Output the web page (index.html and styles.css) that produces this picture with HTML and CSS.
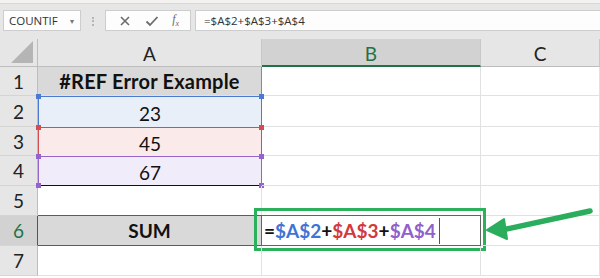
FILE: index.html
```html
<!DOCTYPE html>
<html lang="en">
<head>
    <meta charset="UTF-8">
    <meta name="viewport" content="width=device-width, initial-scale=1.0">
    <title>#REF Error Example</title>
    <link rel="stylesheet" href="styles.css">
</head>
<body>
    <div class="toolbar">
        <div class="name-box">COUNTIF<span class="drop">&#9662;</span></div>
        <div class="grip"></div>
        <div class="icon-box">
            <svg class="ico" viewBox="0 0 12 12" width="12" height="12"><path d="M2 2 L10 10 M10 2 L2 10" stroke="#6b6b6b" stroke-width="1.6" fill="none"/></svg>
            <svg class="ico" viewBox="0 0 14 12" width="14" height="12"><path d="M1.5 6.5 L5 10 L12.5 2" stroke="#6b6b6b" stroke-width="1.8" fill="none"/></svg>
            <span class="fx">f<sub>x</sub></span>
        </div>
        <div class="formula-box">=$A$2+$A$3+$A$4</div>
    </div>

    <div class="sheet">
        <div class="corner"></div>
        <div class="col-head">A</div>
        <div class="col-head selected">B</div>
        <div class="col-head">C</div>

        <div class="row-head">1</div>
        <div class="cell title">#REF Error Example</div>
        <div class="cell"></div>
        <div class="cell"></div>

        <div class="row-head">2</div>
        <div class="cell range blue">23<span class="h tl"></span><span class="h tr"></span></div>
        <div class="cell"></div>
        <div class="cell"></div>

        <div class="row-head">3</div>
        <div class="cell range red">45<span class="h tl"></span><span class="h tr"></span></div>
        <div class="cell"></div>
        <div class="cell"></div>

        <div class="row-head">4</div>
        <div class="cell range purple last">67<span class="h tl"></span><span class="h tr"></span><span class="h bl"></span><span class="h br"></span></div>
        <div class="cell"></div>
        <div class="cell"></div>

        <div class="row-head">5</div>
        <div class="cell"></div>
        <div class="cell"></div>
        <div class="cell"></div>

        <div class="row-head selected">6</div>
        <div class="cell sum">SUM</div>
        <div class="cell active">
            <span class="op">=</span><span class="ref-blue">$A$2</span><span class="op">+</span><span class="ref-red">$A$3</span><span class="op">+</span><span class="ref-purple">$A$4</span><span class="caret"></span>
            <div class="callout"></div>
        </div>
        <div class="cell"></div>

        <div class="row-head">7</div>
        <div class="cell"></div>
        <div class="cell"></div>
        <div class="cell"></div>

        <svg class="arrow" viewBox="0 0 120 60" width="120" height="60">
            <path d="M110 12 L22 31" stroke="#2aad5c" stroke-width="5.5" stroke-linecap="round" fill="none"/>
            <path d="M7 31 L24 20 L27 40 Z" fill="#2aad5c" stroke="#2aad5c" stroke-width="2" stroke-linejoin="round"/>
        </svg>
    </div>
</body>
</html>
```

FILE: styles.css
```css
* {
    box-sizing: border-box;
}
body {
    margin: 0;
    width: 600px;
    height: 278px;
    overflow: hidden;
    background-color: #ffffff;
    font-family: Lato, "Open Sans", sans-serif;
    color: #111111;
}
.toolbar {
    display: flex;
    align-items: flex-start;
    height: 39px;
    padding: 10px 0 0 3px;
    background-color: #e6e6e6;
    border-top: 3px solid #f3f2f1;
    position: relative;
    font-family: "Open Sans", sans-serif;
    font-size: 11.5px;
    color: #333333;
}
.toolbar::before {
    content: "";
    position: absolute;
    left: 0;
    right: 0;
    top: 0;
    height: 1px;
    background-color: #d8d8d8;
}
.name-box {
    width: 78px;
    height: 21px;
    margin-top: -3px;
    padding: 0 0 0 5px;
    display: flex;
    align-items: center;
    justify-content: space-between;
    background-color: #fdfdfd;
    border: 1px solid #cdcdcd;
}
.drop {
    font-size: 8px;
    color: #777;
    margin-right: 6px;
}
.grip {
    width: 2px;
    height: 9px;
    margin: 4px 11px 0 11px;
    border-left: 2px dotted #b5b5b5;
}
.icon-box {
    width: 86px;
    height: 21px;
    margin-top: -3px;
    display: flex;
    align-items: center;
    justify-content: space-around;
    padding: 0 4px 0 6px;
    background-color: #fdfdfd;
    border: 1px solid #cdcdcd;
}
.fx {
    font-family: "Liberation Serif", serif;
    font-style: italic;
    font-size: 12px;
    color: #6b6b6b;
}
.fx sub {
    font-size: 8px;
}
.formula-box {
    flex: 1;
    height: 21px;
    margin: -3px 0 0 4px;
    padding-left: 8px;
    display: flex;
    align-items: center;
    background-color: #fdfdfd;
    border: 1px solid #cdcdcd;
    border-right: none;
}
.sheet {
    position: relative;
    display: grid;
    grid-template-columns: 38px 224px 219px 1fr;
    grid-template-rows: 28px 29px 31px 29px 30px 30px 30px 30px;
    background-color: #ffffff;
    font-size: 19px;
}
.corner {
    background-color: #e6e6e6;
    border-right: 1px solid #bdbdbd;
    border-bottom: 1px solid #bdbdbd;
    position: relative;
}
.corner::after {
    content: "";
    position: absolute;
    right: 4px;
    bottom: 3px;
    border-left: 22px solid transparent;
    border-bottom: 22px solid #b5b5b5;
}
.col-head {
    display: flex;
    align-items: center;
    justify-content: center;
    padding-top: 2px;
    background-color: #e6e6e6;
    border-right: 1px solid #c8c8c8;
    border-bottom: 1px solid #bdbdbd;
    color: #222222;
}
.col-head.selected {
    background-color: #d2d2d2;
    color: #217346;
    border-bottom: 2px solid #217346;
}
.row-head {
    display: flex;
    align-items: center;
    justify-content: center;
    background-color: #e6e6e6;
    border-right: 1px solid #bdbdbd;
    border-bottom: 1px solid #d4d4d4;
    color: #222222;
}
.row-head.selected {
    background-color: #d2d2d2;
    color: #217346;
    border-right: 1px solid #217346;
}
.cell {
    position: relative;
    display: flex;
    align-items: center;
    justify-content: center;
    border-right: 1px solid #e1e1e1;
    border-bottom: 1px solid #e1e1e1;
}
.title {
    background-color: #d9d9d9;
    font-weight: bold;
    font-size: 20px;
    letter-spacing: 0.2px;
    border-right: 1px solid #8a8a8a;
}
.range {
    border-bottom: none;
    border-top: 1px solid;
    border-left: 1px solid;
    border-right: 1px solid;
    padding-top: 2px;
}
.range.last {
    border-bottom: 1px solid;
}
.blue {
    background-color: #e9eff9;
    border-color: #4a7bd0;
}
.red {
    background-color: #fbeaea;
    border-color: #d24d50;
}
.purple {
    background-color: #f1ecf9;
    border-color: #9365cc;
}
.h {
    position: absolute;
    width: 5px;
    height: 5px;
}
.blue .h { background-color: #4a7bd0; }
.red .h { background-color: #d24d50; }
.purple .h { background-color: #9365cc; }
.h.tl { left: -3px; top: -3px; }
.h.tr { right: -3px; top: -3px; }
.h.bl { left: -3px; bottom: -3px; }
.h.br { right: -3px; bottom: -3px; }
.sum {
    background-color: #d9d9d9;
    font-weight: bold;
    border-top: 1px solid #5c5c5c;
    border-bottom: 1px solid #5c5c5c;
    border-right: 1px solid #5c5c5c;
    margin-top: -1px;
}
.active {
    justify-content: flex-start;
    padding-left: 2px;
    font-weight: bold;
    border: 1px solid #5f665f;
    margin-top: -1px;
    margin-left: -1px;
}
.op { color: #111; }
.ref-blue { color: #3f74d4; }
.ref-red { color: #d3393c; }
.ref-purple { color: #9160cc; }
.caret {
    width: 1px;
    height: 26px;
    margin-left: 3px;
    background-color: #555;
}
.callout {
    position: absolute;
    left: -8px;
    top: -8px;
    right: -6px;
    bottom: -6px;
    border: 3px solid #2bb05c;
}
.arrow {
    position: absolute;
    left: 480px;
    top: 160px;
}
```
